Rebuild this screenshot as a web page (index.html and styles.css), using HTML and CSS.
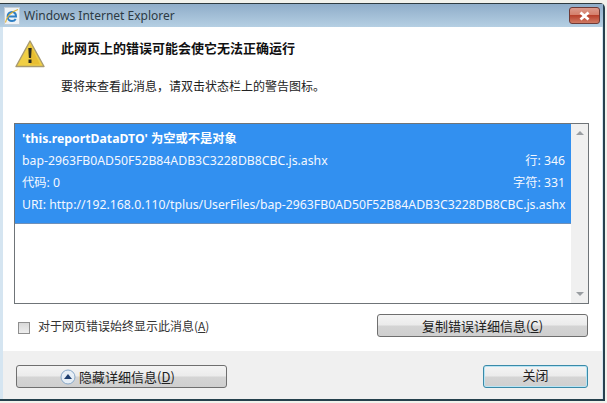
FILE: index.html
```html
<!DOCTYPE html>
<html lang="zh">
<head>
<meta charset="utf-8">
<title>Windows Internet Explorer</title>
<link rel="stylesheet" href="styles.css">
</head>
<body>
<div class="window">
  <div class="titlebar">
    <svg class="ie-icon" width="16" height="18" viewBox="0 0 16 18">
      <rect x="0.500" y="0.500" width="15" height="17" fill="#eef3f7" stroke="#c3ced8"/>
      <path d="M4 9.500H12C12 6.800 10.300 5 8 5C5.500 5 3.600 7 3.600 9.500C3.600 12 5.500 14 8 14C9.800 14 11 13.200 11.700 12" fill="none" stroke="#2f7fc4" stroke-width="2"/>
      <path d="M1.500 15.500C2.500 10 7 4.500 14 2.500" fill="none" stroke="#e0b030" stroke-width="1.200"/>
    </svg>
    <span class="title">Windows Internet Explorer</span>
    <div class="close">
      <svg width="13" height="10" viewBox="0 0 13 10"><path d="M2.500 1.500l8 7M10.500 1.500l-8 7" stroke="#fff" stroke-width="2.800"/></svg>
    </div>
  </div>
  <div class="content">
    <div class="head">
      <svg class="warn" width="30" height="28" viewBox="0 0 30 28">
        <path d="M15 1L29 26.500H1Z" fill="#f0cf45" stroke="#a89a70" stroke-linejoin="round" stroke-width="1.400"/>
        <path d="M15 4L25 24.500H15Z" fill="#e0ad20" opacity=".5"/>
        <path d="M13.300 8h3.400l-.6 10h-2.200Z" fill="#2c2c20"/>
        <rect x="13.500" y="19.500" width="3" height="3.500" fill="#2c2c20"/>
      </svg>
      <div class="messages">
        <h1 class="heading">此网页上的错误可能会使它无法正确运行</h1>
        <p class="hint">要将来查看此消息，请双击状态栏上的警告图标。</p>
      </div>
    </div>
    <div class="listbox">
      <div class="list-main">
        <div class="selected">
          <div class="row"><strong>'this.reportDataDTO' 为空或不是对象</strong></div>
          <div class="row"><span>bap-2963FB0AD50F52B84ADB3C3228DB8CBC.js.ashx</span><span>行: 346</span></div>
          <div class="row"><span>代码: 0</span><span>字符: 331</span></div>
          <div class="row"><span>URI: http://192.168.0.110/tplus/UserFiles/bap-2963FB0AD50F52B84ADB3C3228DB8CBC.js.ashx</span></div>
        </div>
      </div>
      <div class="scrollbar">
        <svg width="8" height="4" viewBox="0 0 8 4"><path d="M4 0L8 4H0Z" fill="#9a9ea2"/></svg>
        <svg width="8" height="4" viewBox="0 0 8 4"><path d="M4 4L8 0H0Z" fill="#9a9ea2"/></svg>
      </div>
    </div>
    <div class="options">
      <label class="check"><span class="box"></span><span>对于网页错误始终显示此消息(<u>A</u>)</span></label>
      <button class="btn btn-copy">复制错误详细信息(<u>C</u>)</button>
    </div>
  </div>
  <div class="footer">
    <button class="btn btn-hide">
      <svg width="16" height="16" viewBox="0 0 16 16"><circle cx="8" cy="8" r="7" fill="#e6eef6" stroke="#88a8c8"/><path d="M8 5l4 5H4Z" fill="#1f3f70"/></svg>
      <span>隐藏详细信息(<u>D</u>)</span>
    </button>
    <button class="btn btn-close">关闭</button>
  </div>
</div>
</body>
</html>
```
FILE: styles.css
```css
* { box-sizing: border-box; }
html, body { margin: 0; padding: 0; }
body {
  width: 607px;
  height: 403px;
  overflow: hidden;
  background: #f2f2ec;
  padding: 3px 2px 0 0;
  font-family: "Noto Sans CJK SC", "Liberation Sans", sans-serif;
  font-size: 12px;
  color: #222;
}
.window {
  width: 605px;
  height: 398px;
  background: #d5e5f1;
  border-top: 1px solid #2e3b40;
  border-right: 2px solid #27414f;
  border-bottom: 2px solid #25404c;
  border-top-right-radius: 5px;
  padding: 0 1px 0 3px;
  display: flex;
  flex-direction: column;
}
.titlebar {
  height: 23px;
  margin: 0 -1px 0 -3px;
  padding: 0 3px 0 4px;
  background: linear-gradient(#8fadc9, #b5cfe3);
  display: flex;
  align-items: center;
  flex: none;
}
.ie-icon { flex: none; }
.title {
  margin-left: 4px;
  font-family: "Noto Sans", "Liberation Sans", sans-serif;
  font-size: 12px;
  color: #2c3a44;
  flex: 1;
}
.close {
  width: 31px;
  height: 17px;
  border: 1px solid #6e3a36;
  border-radius: 3px;
  background: linear-gradient(#dc9a8c 0, #d5806c 45%, #b8412c 50%, #d07a64 100%);
  display: flex;
  align-items: center;
  justify-content: center;
}
.content {
  height: 324px;
  background: #fff;
  padding: 0 13px 0 11px;
  display: flex;
  flex-direction: column;
  flex: none;
}
.head { display: flex; height: 96px; flex: none; padding-top: 12px; }
.warn { margin: 1px 0 0 1px; flex: none; }
.messages { margin-left: 14px; padding-left: 2px; }
.heading {
  margin: 0;
  font-size: 13px;
  line-height: 18px;
  font-weight: 700;
  color: #111;
}
.hint { margin: 20px 0 0; font-size: 12px; line-height: 18px; color: #222; }
.listbox {
  height: 181px;
  border: 1px solid #6f7478;
  background: #fff;
  display: flex;
  flex: none;
}
.list-main { flex: 1; min-width: 0; }
.selected {
  height: 100px;
  background: #3290f0;
  color: #f4f8ff;
  padding: 3px 6px 0 7px;
  border-bottom: 1px solid #6f90b8;
}
.row {
  height: 22px;
  display: flex;
  justify-content: space-between;
  align-items: center;
  font-family: "Noto Sans", "Noto Sans CJK SC", sans-serif;
  font-size: 12.250px;
  white-space: nowrap;
}
.row strong { font-weight: 700; color: #fff; }
.scrollbar {
  width: 17px;
  flex: none;
  background: #f0f0f0;
  display: flex;
  flex-direction: column;
  align-items: center;
  justify-content: space-between;
  padding: 7px 0;
}
.options {
  display: flex;
  justify-content: space-between;
  align-items: flex-start;
  height: 47px;
  flex: none;
  padding-top: 10px;
}
.check { display: flex; align-items: center; min-height: 23px; margin-left: 4px; color: #333; }
.box {
  width: 12px;
  height: 12px;
  margin: 4px 8px 0 0;
  border: 1px solid #8f8f8f;
  background: linear-gradient(#d8d8d8, #eeeeee);
  flex: none;
}
.btn {
  font-family: "Noto Sans CJK SC", sans-serif;
  font-size: 13px;
  color: #222;
  border: 1px solid #6f6f6f;
  border-radius: 3px;
  background: linear-gradient(#f4f4f4 0, #ebebeb 48%, #d4d4d4 52%, #cfcfcf 100%);
  padding: 0;
  display: flex;
  align-items: center;
  justify-content: center;
}
.btn-copy { width: 211px; height: 23px; margin-right: 1px; }
.footer {
  flex: 1;
  background: #f0f0f0;
  padding: 14px 14px 0 13px;
  display: flex;
  justify-content: space-between;
  align-items: flex-start;
}
.btn-hide { width: 211px; height: 23px; gap: 3px; padding-right: 8px; }
.btn-close {
  width: 105px;
  height: 23px;
  border-color: #3a8aa8;
  box-shadow: inset 0 0 0 1px #b8e4f4;
  padding-bottom: 4px;
}
```
